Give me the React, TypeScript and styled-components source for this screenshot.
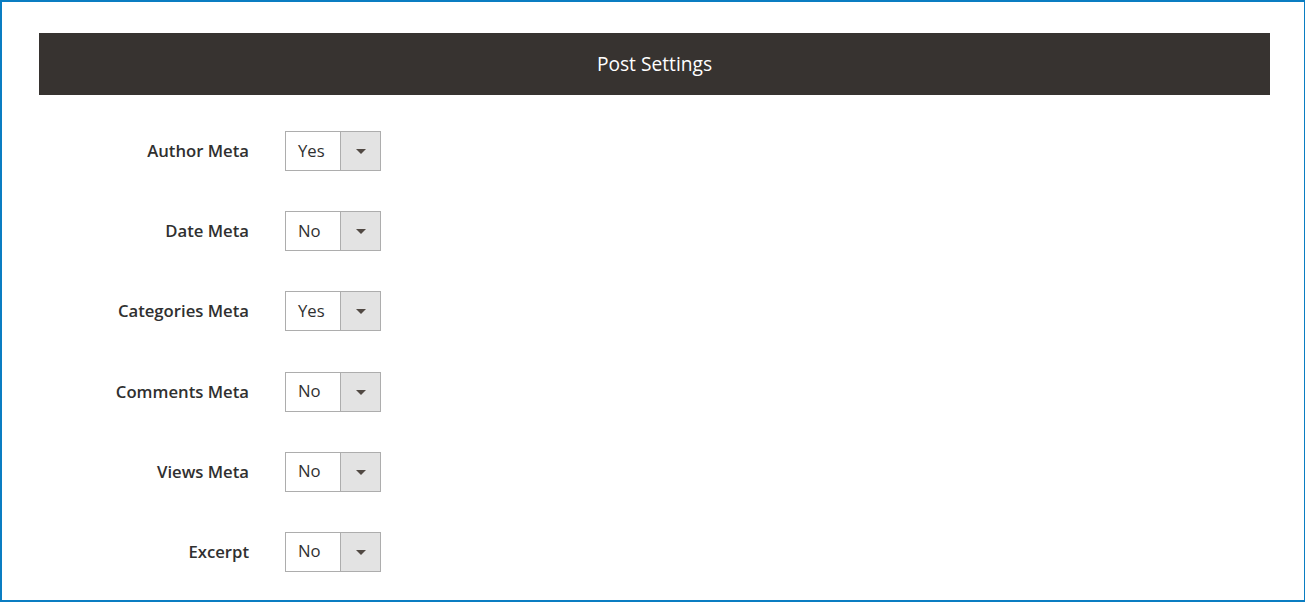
import React from 'react';
import styled, { createGlobalStyle } from 'styled-components';

const GlobalStyle = createGlobalStyle`
  html, body {
    margin: 0;
    padding: 0;
    background: #ffffff;
    font-family: "Open Sans", "Noto Sans", sans-serif;
  }
  * { box-sizing: border-box; }
`;

const Frame = styled.div`
  width: 1305px;
  height: 602px;
  border: 2px solid #0a7dc2;
  border-right-width: 1px;
  padding: 31px 34px 0 37px;
  overflow: hidden;
`;

const Header = styled.div`
  height: 62px;
  padding-bottom: 2px;
  background-color: #373330;
  color: #ffffff;
  display: flex;
  align-items: center;
  justify-content: center;
  font-size: 19.2px;
  font-weight: 400;
`;

const Fields = styled.div`
  display: flex;
  flex-direction: column;
  gap: 40.2px;
  margin-top: 36px;
`;

const Row = styled.div`
  display: grid;
  grid-template-columns: 210px 96px;
  column-gap: 36px;
  align-items: center;
  height: 40px;
`;

const Label = styled.label`
  text-align: right;
  font-size: 16.7px;
  font-weight: 600;
  color: #303030;
  margin-top: -1px;
`;

const Select = styled.div`
  display: flex;
  height: 40px;
  border: 1px solid #adadad;
  background: #ffffff;
`;

const Value = styled.div`
  flex: 1;
  display: flex;
  align-items: center;
  padding-left: 12px;
  padding-bottom: 2px;
  font-size: 16.7px;
  color: #303030;
`;

const Arrow = styled.div`
  width: 40px;
  border-left: 1px solid #adadad;
  background: #e3e3e3;
  display: flex;
  align-items: center;
  justify-content: center;

  &::after {
    content: '';
    border-left: 5px solid transparent;
    border-right: 5px solid transparent;
    border-top: 5px solid #514943;
    margin-top: 1px;
  }
`;

const fields = [
  { label: 'Author Meta', value: 'Yes' },
  { label: 'Date Meta', value: 'No' },
  { label: 'Categories Meta', value: 'Yes' },
  { label: 'Comments Meta', value: 'No' },
  { label: 'Views Meta', value: 'No' },
  { label: 'Excerpt', value: 'No' },
];

export default function App() {
  return (
    <>
      <GlobalStyle />
      <Frame>
        <Header>Post Settings</Header>
        <Fields>
          {fields.map((f) => (
            <Row key={f.label}>
              <Label>{f.label}</Label>
              <Select>
                <Value>{f.value}</Value>
                <Arrow />
              </Select>
            </Row>
          ))}
        </Fields>
      </Frame>
    </>
  );
}
